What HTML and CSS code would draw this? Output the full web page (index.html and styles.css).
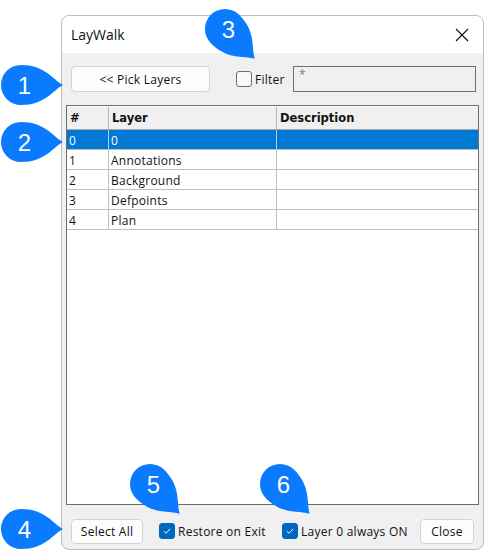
FILE: index.html
```html
<!DOCTYPE html>
<html lang="en">
<head>
<meta charset="utf-8">
<title>LayWalk</title>
<link rel="stylesheet" href="styles.css">
</head>
<body>
<div class="window">
  <div class="titlebar">
    <span class="title">LayWalk</span>
    <svg class="close-x" viewBox="0 0 14 14"><path d="M1 1L13 13M13 1L1 13"/></svg>
  </div>
  <div class="content">
    <div class="toprow">
      <button class="btn pick">&lt;&lt; Pick Layers</button>
      <label class="check filter"><span class="box"></span>Filter</label>
      <div class="filter-input">*</div>
    </div>
    <div class="tablewrap">
      <div class="row head"><div class="c n">#</div><div class="c l">Layer</div><div class="c d">Description</div></div>
      <div class="row sel"><div class="c n">0</div><div class="c l">0</div><div class="c d"></div></div>
      <div class="row"><div class="c n">1</div><div class="c l">Annotations</div><div class="c d"></div></div>
      <div class="row"><div class="c n">2</div><div class="c l">Background</div><div class="c d"></div></div>
      <div class="row"><div class="c n">3</div><div class="c l">Defpoints</div><div class="c d"></div></div>
      <div class="row"><div class="c n">4</div><div class="c l">Plan</div><div class="c d"></div></div>
    </div>
    <div class="bottomrow">
      <button class="btn all">Select All</button>
      <label class="check restore"><span class="box on"><svg viewBox="0 0 16 16"><path d="M4.5 8.2L7 10.6L11.5 5.6"/></svg></span>Restore on Exit</label>
      <label class="check always"><span class="box on"><svg viewBox="0 0 16 16"><path d="M4.5 8.2L7 10.6L11.5 5.6"/></svg></span>Layer 0 always ON</label>
      <button class="btn closeb">Close</button>
    </div>
  </div>
</div>
<div class="callout c1"><svg viewBox="-20 -20 40 40"><path d="M42 0C31 -6 24 -20 0 -20A20 20 0 0 0 0 20C24 20 31 6 42 0Z"/></svg><span>1</span></div>
<div class="callout c2"><svg viewBox="-20 -20 40 40"><path d="M42 0C31 -6 24 -20 0 -20A20 20 0 0 0 0 20C24 20 31 6 42 0Z"/></svg><span>2</span></div>
<div class="callout c3 diag"><svg viewBox="-20 -20 40 40"><path d="M42 0C31 -6 24 -20 0 -20A20 20 0 0 0 0 20C24 20 31 6 42 0Z"/></svg><span>3</span></div>
<div class="callout c4"><svg viewBox="-20 -20 40 40"><path d="M42 0C31 -6 24 -20 0 -20A20 20 0 0 0 0 20C24 20 31 6 42 0Z"/></svg><span>4</span></div>
<div class="callout c5 diag"><svg viewBox="-20 -20 40 40"><path d="M42 0C31 -6 24 -20 0 -20A20 20 0 0 0 0 20C24 20 31 6 42 0Z"/></svg><span>5</span></div>
<div class="callout c6 diag"><svg viewBox="-20 -20 40 40"><path d="M42 0C31 -6 24 -20 0 -20A20 20 0 0 0 0 20C24 20 31 6 42 0Z"/></svg><span>6</span></div>
</body>
</html>
```
FILE: styles.css
```css
* { box-sizing: border-box; }
html, body { margin: 0; height: 550px; overflow: hidden; background: #fff; }
body { position: relative; padding: 15px 0 0 61px; font-family: "Open Sans", "Noto Sans", sans-serif; font-size: 12px; letter-spacing: 0.25px; color: #111; }
.window { width: 423px; height: 535px; border: 1px solid #bdbdbd; border-radius: 8px; overflow: hidden; background: #f0f0f0; display: flex; flex-direction: column; }
.titlebar { height: 37px; background: #fff; display: flex; align-items: center; justify-content: space-between; padding: 0 14px 0 9px; flex: none; }
.title { font-size: 14px; letter-spacing: 0; }
.close-x { width: 14px; height: 14px; }
.close-x path { stroke: #111; stroke-width: 1.1; fill: none; }
.content { flex: 1; display: flex; flex-direction: column; padding: 13px 7px 5px 4px; }
.toprow { display: flex; align-items: center; height: 26px; margin-left: 5px; }
.btn { font: inherit; letter-spacing: inherit; color: #111; background: #fdfdfd; border: 1px solid #d3d3d3; border-radius: 4px; padding: 0; }
.pick { width: 139px; height: 26px; margin-right: 26px; }
.check { display: flex; align-items: center; }
.box { width: 16px; height: 16px; border: 1px solid #6e6e6e; border-radius: 3px; background: #f8f8f8; margin-right: 3px; flex: none; }
.box.on { background: #0067c0; border-color: #0067c0; }
.box svg { display: block; width: 14px; height: 14px; }
.box svg path { fill: none; stroke: #fff; stroke-width: 1.1; }
.filter { width: 57px; }
.filter-input { width: 183px; height: 26px; border: 1px solid #6f6f6f; background: #f0f0f0; color: #778; padding: 0 5px; font-size: 12px; line-height: 15px; }
.tablewrap { width: 413px; height: 400px; margin-top: 13px; border: 1px solid #6d6d6d; background: #fff; flex: none; }
.row { display: flex; height: 20px; border-bottom: 1px solid #bfbfbf; line-height: 21px; }
.c { padding-left: 2px; border-right: 1px solid #bfbfbf; white-space: nowrap; flex: none; }
.n { width: 42px; }
.l { width: 168px; }
.d { flex: 1; border-right: 0; }
.head { height: 24px; background: #f0f0f0; border-bottom: 1px solid #a8a8a8; line-height: 22px; font-family: "DejaVu Sans", sans-serif; font-weight: 700; font-size: 11.5px; letter-spacing: 0; border-top: 1px solid #fff; }
.head .c { padding-left: 3px; border-right-color: #b5b5b5; }
.sel { background: #0078d4; color: #fff; }
.sel .c { border-right-color: #bfcfdc; }
.bottomrow { display: flex; align-items: center; height: 26px; margin-top: 13px; margin-left: 5px; }
.all { width: 72px; height: 25px; margin-right: 16px; }
.restore { width: 123px; }
.always { width: 138px; }
.closeb { width: 54px; height: 25px; }
.callout { position: absolute; width: 40px; height: 40px; }
.callout svg { position: absolute; inset: 0; width: 40px; height: 40px; overflow: visible; }
.callout path { fill: #0a7aff; }
.callout span { position: absolute; inset: 2px 0 0 7px; display: flex; align-items: center; justify-content: center; color: #fff; font-family: "Liberation Sans", sans-serif; font-size: 24px; letter-spacing: 0; }
.diag svg { transform: rotate(45deg); }
.c1 { left: 1px; top: 65px; }
.c2 { left: 1px; top: 122px; }
.c3 { left: 205px; top: 9px; }
.c4 { left: 1px; top: 509px; }
.c5 { left: 130px; top: 464px; }
.c6 { left: 260px; top: 464px; }
```
